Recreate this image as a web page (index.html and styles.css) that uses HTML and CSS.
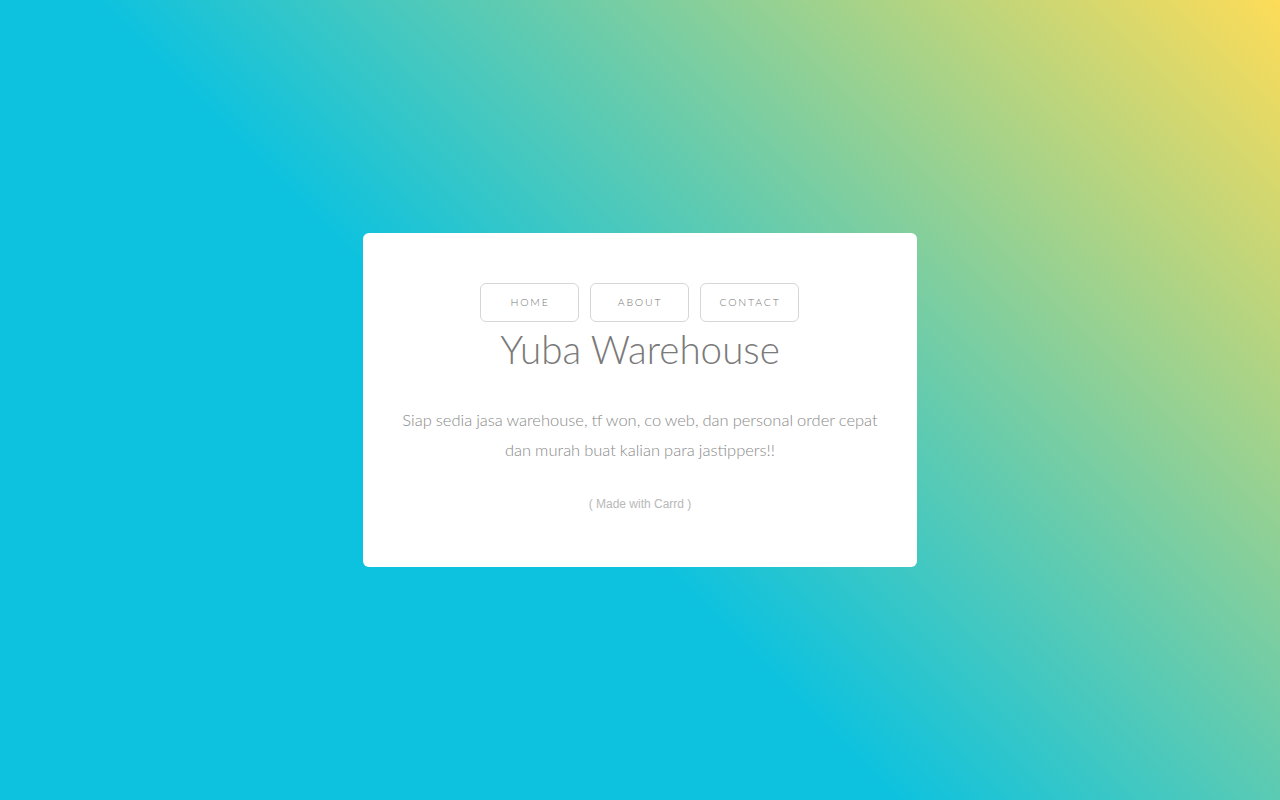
FILE: index.html
```html
<!DOCTYPE html>
<html>
<head>
<meta charset="utf-8">
<link rel="stylesheet" href="styles.css">
</head>
<body>
<div class="page">
  <div class="card">
    <nav class="nav">
      <a class="btn" href="#">Home</a>
      <a class="btn" href="#">About</a>
      <a class="btn" href="#">Contact</a>
    </nav>
    <h1 class="title">Yuba Warehouse</h1>
    <p class="text">Siap sedia jasa warehouse, tf won, co web, dan personal order cepat dan murah buat kalian para jastippers!!</p>
    <p class="credit">( Made with Carrd )</p>
  </div>
</div>
</body>
</html>
```
FILE: styles.css
```css
html, body {
  margin: 0;
  padding: 0;
  height: 100%;
}
body {
  background: linear-gradient(45deg, #0dc2df 43%, #fddc58 100%);
  font-family: Lato, "Open Sans", sans-serif;
}
.page {
  height: 800px;
  display: flex;
  align-items: center;
  justify-content: center;
}
.card {
  width: 554px;
  height: 334px;
  box-sizing: border-box;
  background: #fff;
  border-radius: 6px;
  padding: 50px 30px 0;
  display: flex;
  flex-direction: column;
  align-items: center;
}
.nav {
  display: flex;
  gap: 11px;
  margin-left: -2px;
}
.btn {
  width: 99px;
  height: 39px;
  box-sizing: border-box;
  border: 1px solid #d6d6d6;
  border-radius: 6px;
  display: flex;
  align-items: center;
  justify-content: center;
  font-family: Lato, sans-serif;
  font-weight: 300;
  font-size: 10.5px;
  letter-spacing: 1.8px;
  text-transform: uppercase;
  color: #777;
  text-decoration: none;
  padding-left: 2px;
  padding-bottom: 1px;
}
.title {
  margin: 1px 0 0;
  font-family: Lato, sans-serif;
  font-weight: 300;
  font-size: 38.6px;
  line-height: 52px;
  color: #7a7a7a;
}
.text {
  margin: 30px 0 0;
  font-family: Lato, sans-serif;
  font-weight: 300;
  font-size: 16.5px;
  line-height: 30px;
  word-spacing: -0.5px;
  color: #8a8a8a;
  text-align: center;
}
.credit {
  margin: 32px 0 0;
  font-family: "Liberation Sans", Arial, sans-serif;
  font-size: 12px;
  color: #b8b8b8;
}
```
